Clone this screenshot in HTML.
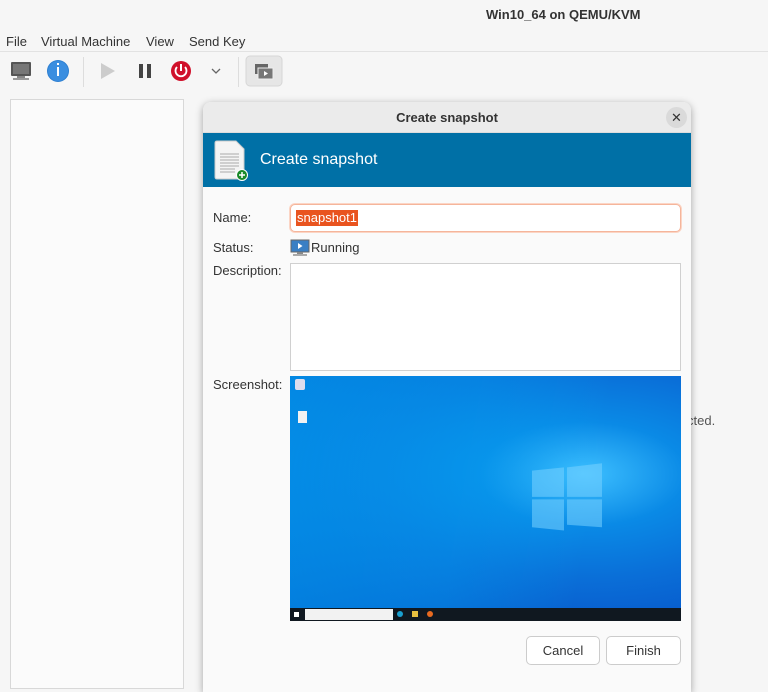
<!DOCTYPE html>
<html><head><meta charset="utf-8"><style>
*{box-sizing:border-box;margin:0;padding:0}
body{width:768px;height:678px;overflow:hidden;background:#f6f6f6;font-family:"Liberation Sans","DejaVu Sans",sans-serif;font-size:13px;color:#333;position:relative}
.abs{position:absolute}
</style></head><body>
<div class="abs" style="left:0;top:0;width:768px;height:30px;background:#f6f6f6"></div>
<div class="abs" style="left:486px;top:7px;font-weight:bold;font-size:13px;color:#333">Win10_64 on QEMU/KVM</div>
<div class="abs" style="left:0;top:30px;width:768px;height:22px;border-bottom:1px solid #e2e2e2"></div>
<div class="abs" style="left:6px;top:34px;font-size:13px">File</div>
<div class="abs" style="left:41px;top:34px;font-size:13px">Virtual Machine</div>
<div class="abs" style="left:146px;top:34px;font-size:13px">View</div>
<div class="abs" style="left:189px;top:34px;font-size:13px">Send Key</div>
<!-- toolbar -->
<svg class="abs" style="left:0;top:52px" width="300" height="40">
<rect x="11" y="10" width="20" height="14" rx="1" fill="#555"/><rect x="13" y="12" width="16" height="10" fill="#777"/><rect x="17" y="24" width="8" height="3" fill="#888"/><rect x="13" y="26" width="16" height="2" fill="#999"/>
<circle cx="58" cy="19" r="11" fill="#2d7fd1"/><circle cx="58" cy="19" r="10" fill="#3a8ee0"/><rect x="57" y="15" width="2" height="9" fill="#fff"/><rect x="57" y="11" width="2" height="2" fill="#fff"/>
<rect x="83" y="5" width="1" height="30" fill="#ddd"/>
<path d="M101 11 L115 19 L101 27Z" fill="#ccc"/>
<rect x="139" y="12" width="4" height="14" fill="#444"/><rect x="147" y="12" width="4" height="14" fill="#444"/>
<circle cx="181" cy="19" r="10" fill="#d0102a"/><path d="M177 15 A5.5 5.5 0 1 0 185 15" stroke="#fff" stroke-width="1.8" fill="none"/><rect x="180" y="12" width="2" height="7" fill="#fff"/>
<path d="M212 17 L216 21 L220 17" stroke="#666" stroke-width="1.3" fill="none"/>
<rect x="238" y="5" width="1" height="30" fill="#ddd"/>
<rect x="246" y="4" width="36" height="30" rx="4" fill="#e6e6e6" stroke="#d6d6d6"/>
<rect x="255" y="12" width="13" height="10" fill="#666"/><rect x="258" y="16" width="15" height="11" fill="#777" stroke="#eee"/><path d="M264 19 L268 21.5 L264 24Z" fill="#fff"/>
</svg>
<!-- left panel -->
<div class="abs" style="left:10px;top:99px;width:174px;height:590px;background:#fbfbfb;border:1px solid #d8d8d8"></div>
<div class="abs" style="left:687px;top:413px;font-size:13px;color:#555">cted.</div>
<!-- dialog -->
<div class="abs" style="left:203px;top:102px;width:488px;height:590px;background:#fafafa;border-radius:8px 8px 0 0;box-shadow:0 2px 8px rgba(0,0,0,.35);overflow:hidden">
 <div class="abs" style="left:0;top:0;width:488px;height:31px;background:#ebebeb;border-bottom:1px solid #ddd"></div>
 <div class="abs" style="left:0;top:8px;width:488px;text-align:center;font-weight:bold;font-size:13px;color:#333">Create snapshot</div>
 <div class="abs" style="left:463px;top:5px;width:21px;height:21px;border-radius:50%;background:#dadada;text-align:center;line-height:21px;font-size:13px;color:#333">✕</div>
 <div class="abs" style="left:0;top:31px;width:488px;height:54px;background:#0070a6"></div>
 <svg class="abs" style="left:10px;top:38px" width="40" height="42">
  <path d="M2 3 Q2 1 4 1 L23 1 L31 9 L31 37 Q31 39 29 39 L4 39 Q2 39 2 37Z" fill="#f4f4f4" stroke="#ccc"/>
  <g stroke="#aaa" stroke-width="1"><path d="M7 14H26M7 17H26M7 20H26M7 23H26M7 26H26M7 29H22M7 32H22"/></g>
  <circle cx="29" cy="35" r="5.5" fill="#1a8a2a" stroke="#fff"/><path d="M26 35H32M29 32V38" stroke="#fff" stroke-width="1.5"/>
 </svg>
 <div class="abs" style="left:57px;top:49px;font-size:16px;color:#fff">Create snapshot</div>
 <div class="abs" style="left:10px;top:108px">Name:</div>
 <div class="abs" style="left:87px;top:102px;width:391px;height:28px;background:#fff;border:1px solid #f5b59b;border-radius:5px;box-shadow:0 0 0 1px #fbd5c5"></div>
 <div class="abs" style="left:93px;top:108px;background:#e9541f;color:#fff;padding:0 1px;font-size:13px;line-height:16px">snapshot1</div>
 <div class="abs" style="left:10px;top:138px">Status:</div>
 <svg class="abs" style="left:87px;top:137px" width="20" height="18"><rect x="1" y="1" width="18" height="12" fill="#3a7fc4" stroke="#666"/><path d="M8 4L12.5 7L8 10Z" fill="#fff"/><rect x="7" y="13" width="6" height="2" fill="#888"/><rect x="3" y="15" width="14" height="2" fill="#aaa"/></svg>
 <div class="abs" style="left:108px;top:138px">Running</div>
 <div class="abs" style="left:10px;top:161px">Description:</div>
 <div class="abs" style="left:87px;top:161px;width:391px;height:108px;background:#fff;border:1px solid #d0d0d0"></div>
 <div class="abs" style="left:10px;top:275px">Screenshot:</div>
 <div class="abs" style="left:87px;top:274px;width:391px;height:245px;overflow:hidden;background:radial-gradient(ellipse at 75% 40%,#3ec0ff 0%,#0a8ae6 25%,#0a6fd8 50%,#0545c0 100%)">
  <div class="abs" style="left:0;top:0;width:391px;height:232px;background:linear-gradient(100deg,rgba(0,180,250,.55) 0%,rgba(0,170,245,.35) 45%,rgba(0,60,200,0) 75%)"></div>
  <svg class="abs" style="left:240px;top:84px" width="80" height="75"><path d="M2 13L34 9V45L2 45Z M37 9L72 4V45L37 45Z M2 48L34 48V86L2 82Z M37 48L72 48V82L37 79Z" fill="rgba(120,210,255,.55)" transform="scale(1,0.82)"/></svg>
  <div class="abs" style="left:5px;top:3px;width:10px;height:11px;background:#dde;border-radius:2px"></div>
  <div class="abs" style="left:8px;top:35px;width:9px;height:12px;background:#f2f2f2"></div>
  <div class="abs" style="left:0;top:232px;width:391px;height:13px;background:#101820"></div>
  <div class="abs" style="left:15px;top:233px;width:88px;height:11px;background:#f2f2f2"></div>
  <div class="abs" style="left:4px;top:236px;width:5px;height:5px;background:#fff"></div>
  <div class="abs" style="left:107px;top:235px;width:6px;height:6px;border-radius:50%;background:#1aa0d0"></div>
  <div class="abs" style="left:122px;top:235px;width:6px;height:6px;background:#e8c040"></div>
  <div class="abs" style="left:137px;top:235px;width:6px;height:6px;border-radius:50%;background:#e86a20"></div>
 </div>
 <div class="abs" style="left:323px;top:534px;width:74px;height:29px;border:1px solid #ccc;border-radius:5px;background:#fff;text-align:center;line-height:27px">Cancel</div>
 <div class="abs" style="left:403px;top:534px;width:75px;height:29px;border:1px solid #ccc;border-radius:5px;background:#fff;text-align:center;line-height:27px">Finish</div>
</div>
</body></html>
